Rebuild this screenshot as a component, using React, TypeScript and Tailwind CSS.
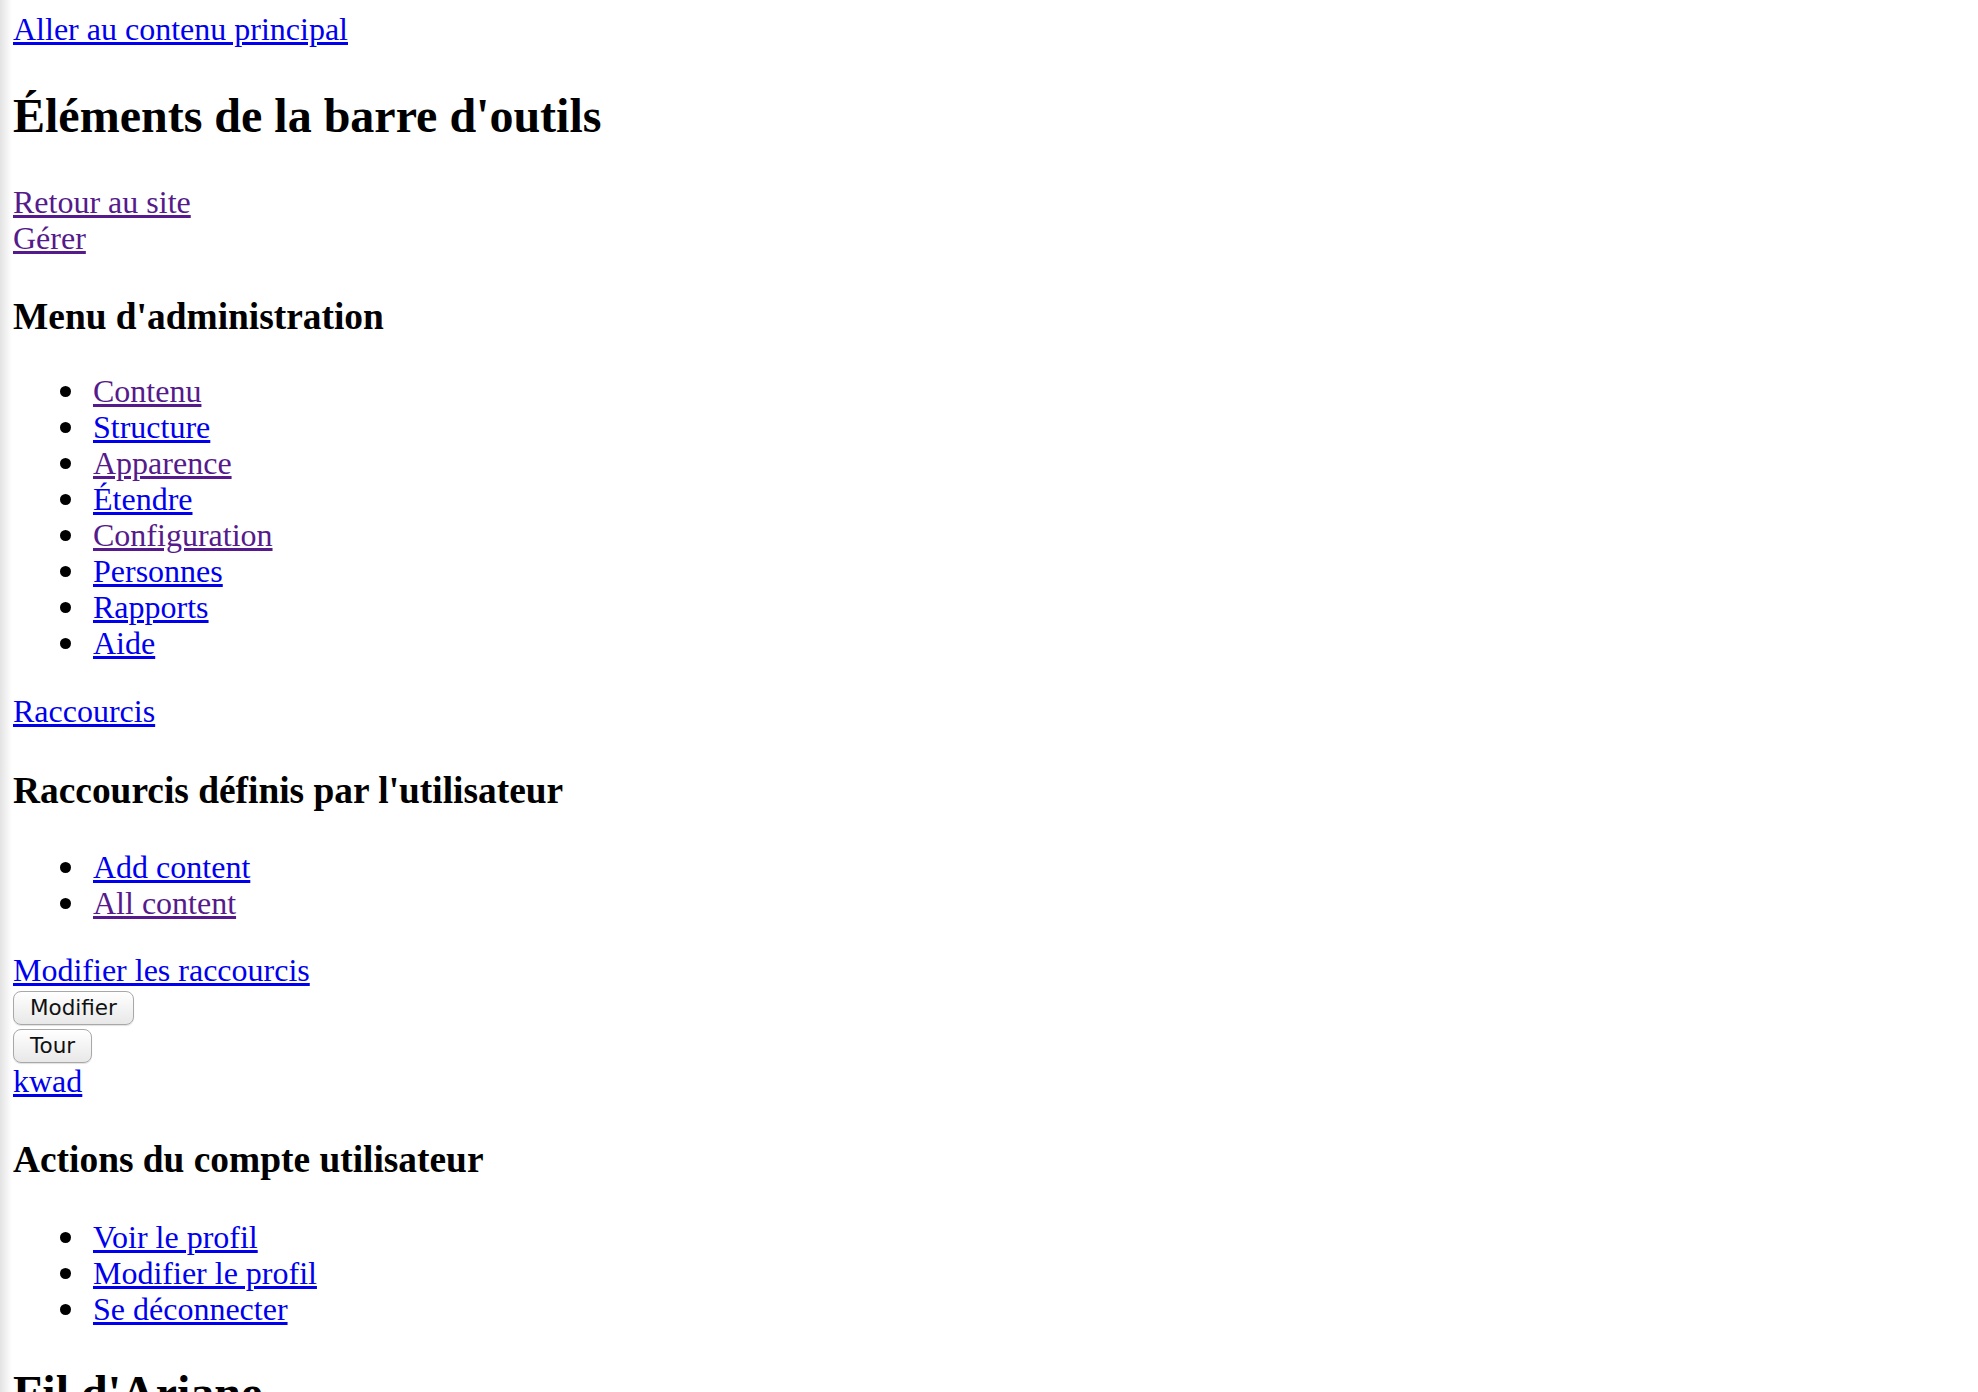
import React from 'react';

type NavLink = { label: string; visited?: boolean };

const adminMenu: NavLink[] = [
  { label: 'Contenu', visited: true },
  { label: 'Structure' },
  { label: 'Apparence', visited: true },
  { label: 'Étendre' },
  { label: 'Configuration', visited: true },
  { label: 'Personnes' },
  { label: 'Rapports' },
  { label: 'Aide' },
];

const shortcuts: NavLink[] = [{ label: 'Add content' }, { label: 'All content', visited: true }];

const accountActions: NavLink[] = [{ label: 'Voir le profil' }, { label: 'Modifier le profil' }, { label: 'Se déconnecter' }];

function Link({ label, visited }: NavLink) {
  return (
    <a href="#" className={`underline ${visited ? 'text-[#551a8b]' : 'text-[#0000ee]'}`}>
      {label}
    </a>
  );
}

function LinkList({ items, className }: { items: NavLink[]; className: string }) {
  return (
    <ul className={`pl-[47px] ${className}`}>
      {items.map((item) => (
        <li key={item.label} className="flex h-[36px]">
          <span className="mt-[13px] mr-[22px] h-[11px] w-[11px] shrink-0 rounded-full bg-black" />
          <Link {...item} />
        </li>
      ))}
    </ul>
  );
}

function SystemButton({ children }: { children: React.ReactNode }) {
  return (
    <button
      type="button"
      className="h-[34px] rounded-[8px] border border-[#a8a8a8] bg-linear-to-b from-white to-[#e8e8e8] px-[16px] font-['DejaVu_Sans',sans-serif] text-[21.5px] leading-[24px] text-[#111] shadow-[0_1px_1px_rgba(0,0,0,0.12)]"
    >
      {children}
    </button>
  );
}

export default function App() {
  return (
    <div className="flex min-h-screen bg-white font-['Liberation_Serif','Times_New_Roman',serif] text-[32px] leading-[36px] text-black">
      {/* shadow of the collapsed toolbar tray */}
      <div className="w-[12px] shrink-0 bg-linear-to-r from-[#e3e3e3] via-[#f1f1f1] to-white" />

      <div className="flex flex-col items-start pt-[11px] pl-px">
        <Link label="Aller au contenu principal" />

        <h1 className="mt-[42px] text-[48px] leading-[54px] font-bold">Éléments de la barre d'outils</h1>

        <div className="mt-[41px] flex flex-col items-start">
          <Link label="Retour au site" visited />
          <Link label="Gérer" visited />
        </div>

        <h2 className="mt-[40px] text-[37.4px] leading-[42px] font-bold">Menu d'administration</h2>
        <LinkList items={adminMenu} className="mt-[35px]" />

        <div className="mt-[32px]">
          <Link label="Raccourcis" />
        </div>

        <h2 className="mt-[41px] text-[37.4px] leading-[42px] font-bold">Raccourcis définis par l'utilisateur</h2>
        <LinkList items={shortcuts} className="mt-[37px]" />

        <div className="mt-[31px]">
          <Link label="Modifier les raccourcis" />
        </div>
        <div className="mt-[3px] flex">
          <SystemButton>Modifier</SystemButton>
        </div>
        <div className="mt-[4px] flex">
          <SystemButton>Tour</SystemButton>
        </div>
        <Link label="kwad" />

        <h2 className="mt-[40px] text-[37.4px] leading-[42px] font-bold">Actions du compte utilisateur</h2>
        <LinkList items={accountActions} className="mt-[38px]" />

        <h2 className="mt-[39px] text-[48px] leading-[54px] font-bold">Fil d'Ariane</h2>
        <div className="h-[200px]" />
      </div>
    </div>
  );
}
